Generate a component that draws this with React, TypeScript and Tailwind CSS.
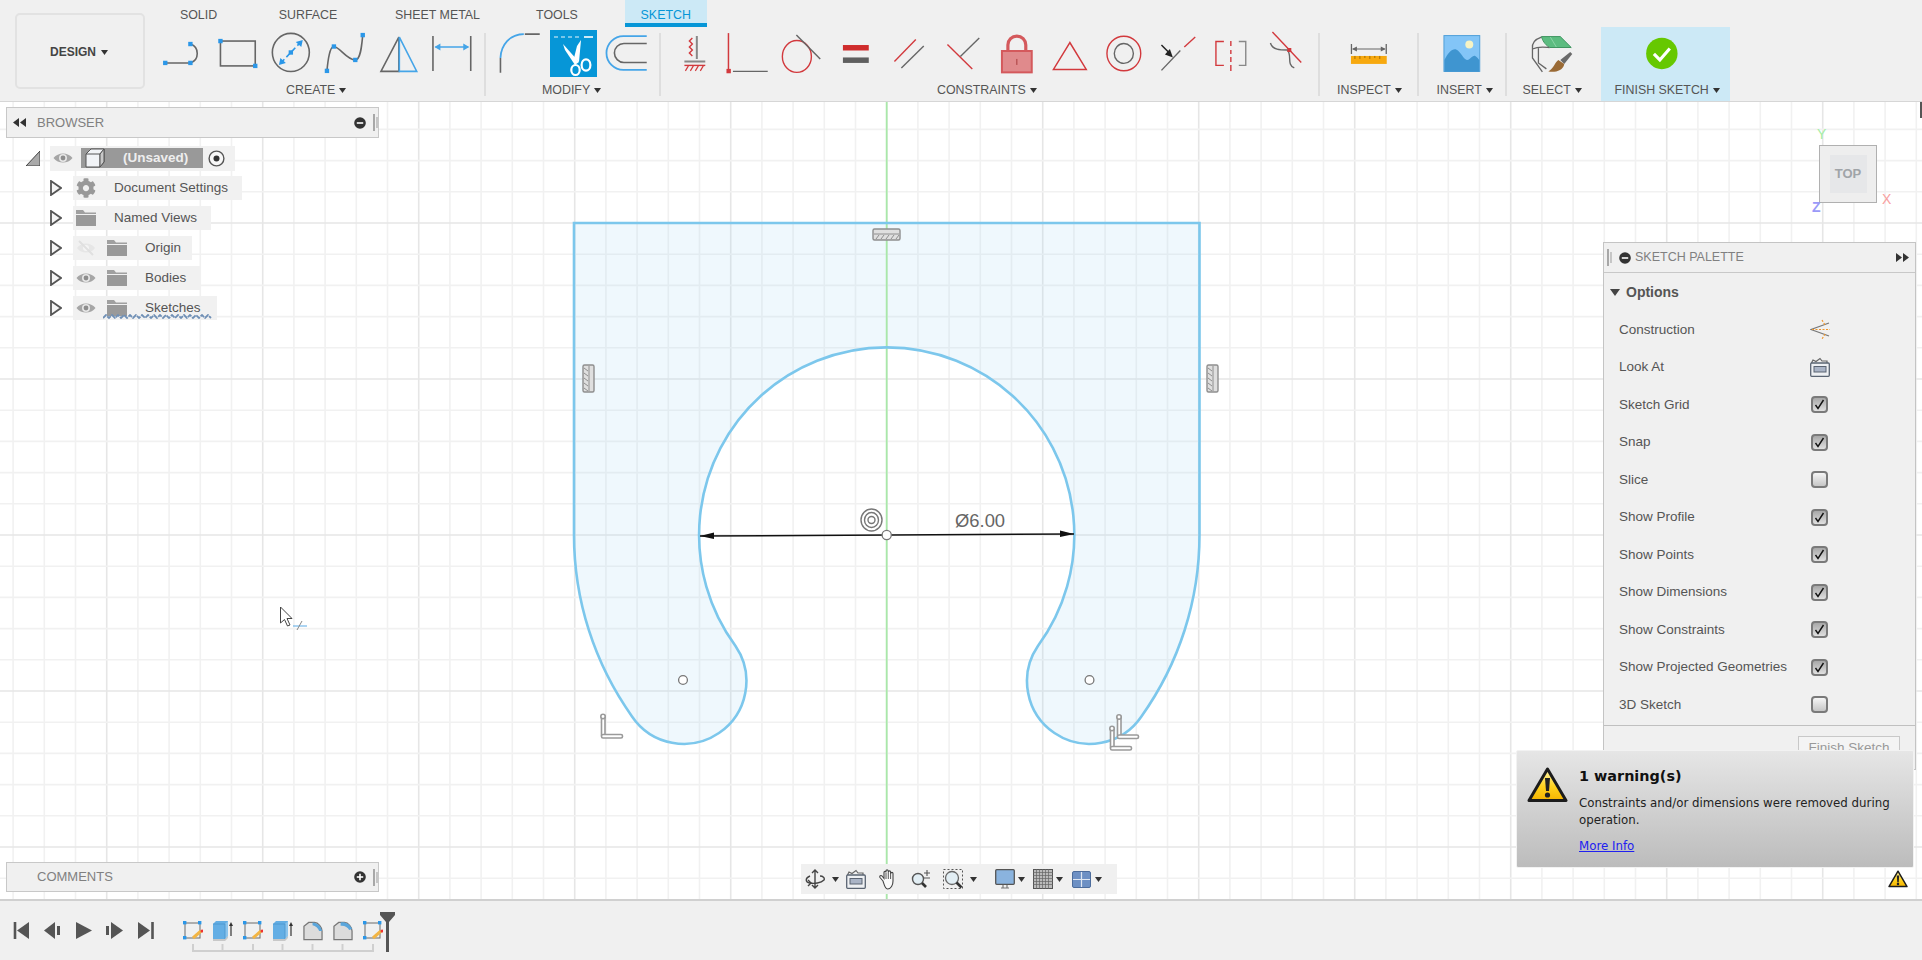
import type { ReactNode } from 'react';
import { FaCog } from 'react-icons/fa';

const GRAY = '#666666';
const BLUE = '#2b97e8';
const RED = '#d2393d';
const OUTLINE =
  'M574 223H1199.5V535A312.7 312.7 0 0 1 1141.4 716.4A62.5 62.5 0 1 1 1037.9 646A187.6 187.6 0 1 0 735.5 646A62.5 62.5 0 1 1 632 716.4A312.7 312.7 0 0 1 574 535Z';

const pts = (list: number[][]) =>
  list.map((p, i) => <rect key={i} x={p[0] - 2.2} y={p[1] - 2.2} width="4.4" height="4.4" fill={BLUE} />);

function Caret() {
  return (
    <svg width="7" height="5" viewBox="0 0 7 5" className="shrink-0">
      <path d="M0 0H7L3.5 5Z" fill="#333" />
    </svg>
  );
}

function Tool({ cx, children }: { cx: number; children: ReactNode }) {
  return (
    <svg viewBox={`${cx - 27} 27 54 46`} fill="none" className="w-[53.7px] h-[46px] shrink-0 overflow-visible">
      {children}
    </svg>
  );
}

function Label({ text, className }: { text: string; className: string }) {
  return (
    <div className={`flex items-center gap-[4px] h-[29px] pt-[6px] text-[12.4px] text-[#555] ${className}`}>
      <span>{text}</span>
      <Caret />
    </div>
  );
}

function Sep() {
  return <div className="w-[2px] h-[63px] mt-[6px] bg-[#dedede] shrink-0" />;
}

function CreateTools() {
  return (
    <>
      <Tool cx={184}>
        <path d="M165 63H190.6A10 10 0 0 0 190.6 44" stroke={GRAY} strokeWidth="1.6" />
        {pts([[165.3, 63], [190.6, 63], [190.6, 44]])}
      </Tool>
      <Tool cx={236.5}>
        <rect x="219" y="41" width="35" height="25" stroke={GRAY} strokeWidth="1.6" />
        {pts([[219, 41], [254, 66]])}
      </Tool>
      <Tool cx={290}>
        <ellipse cx="290" cy="52.5" rx="18.6" ry="19.2" stroke={GRAY} strokeWidth="1.6" />
        <path d="M280 63L300 42" stroke={BLUE} strokeWidth="1.6" strokeDasharray="5 3" />
        <path d="M278 65L279.5 58L285 63ZM302 40L295 42L300.5 47Z" fill={BLUE} />
        {pts([[290, 52.5]])}
      </Tool>
      <Tool cx={345}>
        <path d="M327 71C328 60 330 46 334 46.5C340 47 347 60 355.5 60C361 60 362 45 363 35" stroke={GRAY} strokeWidth="1.6" />
        {pts([[327, 71], [334, 46.5], [355.5, 60], [363, 35]])}
      </Tool>
      <Tool cx={398.5}>
        <path d="M398.5 37L380.5 71.5H398.5Z" stroke={GRAY} strokeWidth="1.6" />
        <path d="M399 37L416.5 71.5H399Z" stroke="#45a5e8" strokeWidth="1.6" />
      </Tool>
      <Tool cx={452.5}>
        <path d="M433.5 36V71M471.5 36V71" stroke={GRAY} strokeWidth="1.6" />
        <path d="M436 47H469" stroke="#45a5e8" strokeWidth="1.6" />
        <path d="M435 47L441 43.5V50.5ZM470 47L464 43.5V50.5Z" fill="#45a5e8" />
      </Tool>
    </>
  );
}

function ModifyTools() {
  return (
    <>
      <Tool cx={520}>
        <path d="M500.5 58V73M525 34H540" stroke={GRAY} strokeWidth="1.6" />
        <path d="M500.5 58C501 45 510 34 524 34" stroke="#45a5e8" strokeWidth="1.8" />
      </Tool>
      <div className="w-[53.7px] h-[46px] shrink-0 relative">
        <svg viewBox="550 30 47 47" className="absolute left-[3.5px] top-[3px] w-[47px] h-[47px] bg-[#0696d7]" fill="none">
          <path d="M554 37H580" stroke="#9fd6f0" strokeWidth="1.4" strokeDasharray="4 3" />
          <path d="M584 37H593" stroke="#fff" strokeWidth="1.6" />
          <path d="M563 44L579 62L575 65L565 50Z" fill="#fff" />
          <path d="M581 40L579 62L574 58L577 46Z" fill="#fff" />
          <ellipse cx="575.5" cy="70" rx="4.2" ry="5" stroke="#fff" strokeWidth="2.2" />
          <ellipse cx="586" cy="65" rx="4.4" ry="5.6" stroke="#fff" strokeWidth="2.2" />
        </svg>
      </div>
      <Tool cx={628}>
        <path d="M648 36H624.5A17 17 0 0 0 624.5 70H648" stroke="#45a5e8" strokeWidth="1.8" />
        <path d="M648 43.5H625A9.5 9.5 0 0 0 625 62.5H648" stroke={GRAY} strokeWidth="1.6" />
      </Tool>
    </>
  );
}

function ConstraintTools() {
  return (
    <>
      <Tool cx={694.5}>
        <path d="M696.5 36V59M684 61.5H705" stroke="#888" strokeWidth="2" />
        <path d="M692 38L689 41L692 44L689 47L692 50L689 53L692 56" stroke={RED} strokeWidth="1.4" />
        <path d="M684 65.5H705" stroke={RED} strokeWidth="1.4" />
        <path d="M688 66L685 71M693 66L690 71M698 66L695 71M703 66L700 71" stroke={RED} strokeWidth="1.2" />
      </Tool>
      <Tool cx={749}>
        <path d="M729.5 33V70" stroke={RED} strokeWidth="1.5" />
        <rect x="727.5" y="69" width="4.4" height="4.4" fill={RED} />
        <path d="M734 71.5H769" stroke={GRAY} strokeWidth="1.5" />
      </Tool>
      <Tool cx={802.5}>
        <ellipse cx="797.5" cy="56.5" rx="14.6" ry="16" stroke={RED} strokeWidth="1.4" />
        <path d="M797 35L821 59" stroke={GRAY} strokeWidth="1.5" />
      </Tool>
      <Tool cx={856}>
        <rect x="843" y="45" width="26" height="5.5" fill="#cf2c2c" />
        <rect x="843" y="57.5" width="26" height="5.5" fill="#5f5f5f" />
      </Tool>
      <Tool cx={910}>
        <path d="M895.5 61.5L917 39.5" stroke={RED} strokeWidth="1.4" />
        <path d="M902.5 68L925 46" stroke={GRAY} strokeWidth="1.4" />
      </Tool>
      <Tool cx={963.5}>
        <path d="M948 44.5L973 69" stroke={RED} strokeWidth="1.4" />
        <path d="M961 56.5L980 38" stroke={GRAY} strokeWidth="1.4" />
      </Tool>
      <Tool cx={1017}>
        <path d="M1008 51V45A9 9 0 0 1 1026 45V51" stroke="#d4595c" strokeWidth="3.2" />
        <rect x="1002" y="51" width="30" height="21.5" fill="#e08a8c" stroke="#d4595c" strokeWidth="2" />
        <path d="M1017 59V65" stroke="#a83a3c" strokeWidth="1" />
      </Tool>
      <Tool cx={1071}>
        <path d="M1071 42.5L1054.5 69.5H1087.5Z" stroke={RED} strokeWidth="1.5" />
      </Tool>
      <Tool cx={1125}>
        <ellipse cx="1125" cy="53.5" rx="17" ry="17.3" stroke={RED} strokeWidth="1.4" />
        <ellipse cx="1125" cy="53.5" rx="9.6" ry="10" stroke={GRAY} strokeWidth="1.4" />
      </Tool>
      <Tool cx={1177.5}>
        <path d="M1161 70.5L1180 50.5" stroke={GRAY} strokeWidth="1.4" />
        <path d="M1184 47L1195 37" stroke={RED} strokeWidth="1.4" />
        <path d="M1161 45L1169 53" stroke="#222" strokeWidth="1.5" />
        <path d="M1172.5 57.5L1164.5 54.5L1169.5 49Z" fill="#222" />
      </Tool>
      <Tool cx={1232}>
        <path d="M1225 41.5H1217V65.5H1225" stroke={RED} strokeWidth="1.4" />
        <path d="M1232 41V46M1232 50V54M1232 57V62M1232 65V71" stroke={RED} strokeWidth="1.4" />
        <path d="M1240 41.5H1247V65.5H1240" stroke="#888" strokeWidth="1.4" />
      </Tool>
      <Tool cx={1284.5}>
        <path d="M1272 32L1301 62.5" stroke={RED} strokeWidth="1.4" />
        <path d="M1270 43C1272 50 1280 50 1287 50C1292 55 1286 65 1294 68" stroke={GRAY} strokeWidth="1.4" />
        <rect x="1287" y="48" width="4" height="4" fill={RED} />
      </Tool>
    </>
  );
}

function Ribbon() {
  return (
    <div className="flex h-[102px] bg-[#f0f0f0] border-b border-[#d6d6d6] shrink-0">
      <div className="w-[157px] pl-[15px] pt-[13px] shrink-0">
        <div className="w-[130px] h-[76px] pt-[2px] pr-[2px] border-2 border-[#e2e2e2] rounded-[5px] flex items-center justify-center gap-[5px]">
          <span className="text-[12px] font-bold text-[#444]">DESIGN</span>
          <Caret />
        </div>
      </div>
      <div className="flex flex-col">
        <div className="flex h-[27px] text-[12.4px] text-[#555]">
          <div className="w-[83px] pt-[3px] flex items-center justify-center">SOLID</div>
          <div className="w-[136px] pt-[3px] flex items-center justify-center">SURFACE</div>
          <div className="w-[123px] pt-[3px] flex items-center justify-center">SHEET METAL</div>
          <div className="w-[116px] pt-[3px] flex items-center justify-center">TOOLS</div>
          <div className="ml-[9.5px] w-[82.5px] pt-[3px] flex items-center justify-center bg-[#cce9f6] text-[#0696d7] shadow-[inset_0_-4px_0_#0696d7]">
            SKETCH
          </div>
        </div>
        <div className="flex h-[74px]">
          <div className="w-[327px]">
            <div className="flex h-[46px]">
              <CreateTools />
            </div>
            <Label text="CREATE" className="ml-[129px]" />
          </div>
          <Sep />
          <div className="w-[173px]">
            <div className="flex h-[46px] pl-[7px]">
              <ModifyTools />
            </div>
            <Label text="MODIFY" className="ml-[56px]" />
          </div>
          <Sep />
          <div className="w-[657px]">
            <div className="flex h-[46px] pl-[6.6px]">
              <ConstraintTools />
            </div>
            <Label text="CONSTRAINTS" className="ml-[276px]" />
          </div>
          <Sep />
          <div className="w-[97px]">
            <div className="flex h-[46px] pl-[22px]">
              <Tool cx={1369}>
                <path d="M1351.5 44V54M1386.5 44V54" stroke={GRAY} strokeWidth="1.3" />
                <path d="M1353 49H1385" stroke={GRAY} strokeWidth="1.2" />
                <path d="M1352 49L1357 46.5V51.5ZM1386 49L1381 46.5V51.5Z" fill={GRAY} />
                <rect x="1351" y="56" width="36" height="8" fill="#f7a90f" />
                <path d="M1355 56V59M1360 56V59M1365 56V58M1370 56V59M1375 56V58M1380 56V59" stroke="#8a5d00" strokeWidth="0.8" />
              </Tool>
            </div>
            <Label text="INSPECT" className="ml-[17px]" />
          </div>
          <Sep />
          <div className="w-[85.5px]">
            <div className="flex h-[46px] pl-[16px]">
              <Tool cx={1461.5}>
                <rect x="1443.5" y="35.5" width="36" height="36" fill="#83c5f7" stroke="#4f9fd9" />
                <path d="M1444 72V60C1449 50 1454 47 1458 51C1462 55 1464 60 1467 60C1470 60 1472 55 1475 56C1477 57 1478 59 1479 60V72Z" fill="#3f95d0" />
                <circle cx="1469" cy="44.5" r="4" fill="#f6f3c4" />
              </Tool>
            </div>
            <Label text="INSERT" className="ml-[17.5px]" />
          </div>
          <Sep />
          <div className="w-[94px]">
            <div className="flex h-[46px] pl-[18.5px]">
              <Tool cx={1551.5}>
                <path d="M1541 36.5H1560L1571 47.5H1549C1544 44 1542 40 1541 36.5Z" fill="#5cbc80" stroke="#3e9460" />
                <path d="M1550 37L1556 47" stroke="#8ad4a6" strokeWidth="1" />
                <path d="M1541 37C1535 39 1531 43 1532 49L1532 58L1542 72M1532 49C1538 46 1544 47 1549 47.5M1538 48V63L1546 69" stroke={GRAY} strokeWidth="1.3" />
                <path d="M1560 60L1570 52L1572 54L1564 64Z" fill="#6a6a6a" />
                <path d="M1558 60C1554 63 1554 68 1548 71.5C1554 73 1563 71 1564 64Z" fill="#9a6a35" />
              </Tool>
            </div>
            <Label text="SELECT" className="ml-[16px]" />
          </div>
          <div className="w-[129px] bg-[#cce9f6]">
            <div className="flex h-[46px] pl-[34px]">
              <Tool cx={1662}>
                <ellipse cx="1662" cy="53.5" rx="15.8" ry="15.8" fill="#66c800" />
                <path d="M1654 54L1660 60L1670 48.5" stroke="#fff" strokeWidth="3.2" />
              </Tool>
            </div>
            <Label text="FINISH SKETCH" className="ml-[14px]" />
          </div>
        </div>
      </div>
    </div>
  );
}

function LGlyph({ x, y }: { x: number; y: number }) {
  return (
    <g fill="#fff" stroke="#9a9a9a" strokeWidth="1.6">
      <rect x={x - 1.5} y={y} width="3.5" height="22" rx="1.5" />
      <rect x={x - 1.5} y={y + 19.5} width="21" height="3.5" rx="1.5" />
      <circle cx={x} cy={y + 1.5} r="2.2" />
    </g>
  );
}

function HatchH({ x, y }: { x: number; y: number }) {
  const ticks = [3, 8, 13, 18, 23];
  return (
    <g fill="none" stroke="#8e8e8e">
      <rect x={x} y={y} width="27" height="11" rx="1.5" strokeWidth="1.4" fill="#dfdfdf" />
      <path d={`M${x + 1} ${y + 5}H${x + 26}`} strokeWidth="1" />
      {ticks.map((t) => (
        <path key={t} d={`M${x + t} ${y + 10}L${x + t + 3} ${y + 6}`} strokeWidth="1" />
      ))}
    </g>
  );
}

function HatchV({ x, y }: { x: number; y: number }) {
  const ticks = [3, 8, 13, 18, 23];
  return (
    <g fill="none" stroke="#8e8e8e">
      <rect x={x} y={y} width="11" height="27" rx="1.5" strokeWidth="1.4" fill="#dfdfdf" />
      <path d={`M${x + 6} ${y + 1}V${y + 26}`} strokeWidth="1" />
      {ticks.map((t) => (
        <path key={t} d={`M${x + 1} ${y + t}L${x + 5} ${y + t + 3}`} strokeWidth="1" />
      ))}
    </g>
  );
}

function SketchCanvas() {
  const vx: number[] = [];
  const hy: number[] = [];
  for (let k = -29; k <= 33; k++) vx.push(k);
  for (let k = -14; k <= 12; k++) hy.push(k);

  return (
    <svg viewBox="0 102 1922 797" className="absolute left-0 top-0 w-[1922px] h-[797px]" fill="none">
      {vx.map((k) => (
        <path key={k} d={`M${886.7 + k * 31.2} 102V899`} stroke={k % 5 === 0 ? '#e6e6e6' : '#f1f1f1'} strokeWidth="1.6" />
      ))}
      {hy.map((k) => (
        <path key={k} d={`M0 ${535 + k * 31.2}H1922`} stroke={k % 5 === 0 ? '#e6e6e6' : '#f1f1f1'} strokeWidth="1.6" />
      ))}
      <path d={OUTLINE} fill="#a6d8f5" fillOpacity="0.18" />
      <path d="M886.7 102V899" stroke="#a9e8a9" strokeWidth="1.8" />
      <path d={OUTLINE} stroke="#7cc7ec" strokeWidth="2.6" />
      <HatchH x={873} y={229} />
      <HatchV x={583} y={365} />
      <HatchV x={1207} y={365} />
      <path d="M700 536L1074 534" stroke="#111" strokeWidth="1.5" />
      <path d="M700 536L714 532.5V539ZM1074 534L1060 530.5V537Z" fill="#111" />
      <g stroke="#777">
        <ellipse cx="871.5" cy="520" rx="10.5" ry="11" strokeWidth="1.4" />
        <ellipse cx="871.5" cy="520" rx="7" ry="7.5" strokeWidth="1.4" />
        <circle cx="871.5" cy="520" r="3.5" strokeWidth="1.4" />
      </g>
      <circle cx="886.7" cy="535" r="4.6" fill="#fff" stroke="#777" strokeWidth="1.3" />
      <circle cx="683" cy="680" r="4.4" fill="#fff" stroke="#777" strokeWidth="1.3" />
      <circle cx="1089.5" cy="680" r="4.4" fill="#fff" stroke="#777" strokeWidth="1.3" />
      <LGlyph x={603} y={715} />
      <LGlyph x={1119} y={715.5} />
      <LGlyph x={1112} y={727} />
      <text x="955" y="526.5" fontSize="18.4" fill="#666">Ø6.00</text>
      <path d="M280.5 607V623L284.5 619.5L287.5 626L290 625L287 618.5H292Z" fill="#fff" stroke="#444" strokeWidth="1" />
      <path d="M293 626H307" stroke="#59a9e5" strokeWidth="1" />
      <path d="M297 630L302 621" stroke="#888" strokeWidth="1" />
    </svg>
  );
}

function Eye({ off }: { off?: boolean }) {
  if (off) {
    return (
      <svg width="20" height="16" viewBox="0 0 20 16" fill="none" className="shrink-0">
        <path d="M1 8C5 2 15 2 19 8C15 14 5 14 1 8Z" fill="#e6e6e6" />
        <circle cx="10" cy="8" r="3" fill="#f4f4f4" />
        <path d="M3 1L17 15" stroke="#e0e0e0" strokeWidth="2" />
      </svg>
    );
  }
  return (
    <svg width="20" height="16" viewBox="0 0 20 16" fill="none" className="shrink-0">
      <path d="M0.5 8C5 2 15 2 19.5 8C15 14 5 14 0.5 8Z" fill="#a6a6a6" />
      <circle cx="10" cy="8" r="4" fill="#e6e6e6" />
      <circle cx="10" cy="8" r="2.4" fill="#8d8d8d" />
    </svg>
  );
}

function Folder() {
  return (
    <svg width="20" height="16" viewBox="0 0 20 16" className="shrink-0">
      <path d="M0 0H7L9 2.5H20V4H0Z" fill="#a0a0a0" />
      <rect x="0" y="5" width="20" height="11" fill="#999" />
    </svg>
  );
}

function Chevron() {
  return (
    <svg width="12" height="16" viewBox="0 0 12 16" fill="none" className="shrink-0">
      <path d="M1 1L11 8L1 15Z" stroke="#555" strokeWidth="1.8" fill="#f4f4f4" />
    </svg>
  );
}

function TreeRow({ icons, text, pill, wavy }: { icons: ReactNode; text: string; pill: string; wavy?: boolean }) {
  return (
    <div className="flex items-center h-[30px] pl-[44px] gap-[11px]">
      <Chevron />
      <div className={`relative flex items-center h-[24px] bg-[#f1f1f1] pl-[3px] ${pill}`}>
        {icons}
        <span className="text-[13.5px] text-[#555] whitespace-nowrap">{text}</span>
        {wavy && (
          <svg width="110" height="5" viewBox="0 0 110 5" fill="none" className="absolute left-[30px] top-[18px]">
            <path d="M0 4L3 1L6 4L9 1L12 4L15 1L18 4L21 1L24 4L27 1L30 4L33 1L36 4L39 1L42 4L45 1L48 4L51 1L54 4L57 1L60 4L63 1L66 4L69 1L72 4L75 1L78 4L81 1L84 4L87 1L90 4L93 1L96 4L99 1L102 4L105 1L108 4" stroke="#6f8fb5" strokeWidth="1.8" strokeDasharray="5 1" />
          </svg>
        )}
      </div>
    </div>
  );
}

function Grip() {
  return (
    <svg width="5" height="17" viewBox="0 0 5 17" className="shrink-0">
      <path d="M1 0V17" stroke="#777" strokeWidth="1.2" />
      <path d="M4 3V14" stroke="#bbb" strokeWidth="1.6" />
    </svg>
  );
}

function RoundSign({ plus }: { plus?: boolean }) {
  return (
    <svg width="12" height="12" viewBox="0 0 12 12" className="shrink-0">
      <circle cx="6" cy="6" r="5.8" fill="#333" />
      <path d="M2.8 6H9.2" stroke="#fff" strokeWidth="1.6" />
      {plus && <path d="M6 2.8V9.2" stroke="#fff" strokeWidth="1.6" />}
    </svg>
  );
}

function BrowserPanel() {
  return (
    <div className="absolute left-[6px] top-[5px] w-[373px]">
      <div className="flex items-center h-[31px] bg-[#f0f0f0] border border-[#c8c8c8]">
        <svg width="13" height="9" viewBox="0 0 13 9" className="ml-[6px] shrink-0">
          <path d="M6 0V9L0 4.5ZM13 0V9L7 4.5Z" fill="#333" />
        </svg>
        <span className="ml-[11px] text-[13px] text-[#808080]">BROWSER</span>
        <div className="ml-auto flex items-center gap-[7px]">
          <RoundSign />
          <Grip />
        </div>
      </div>
      <div className="mt-[5px]">
        <div className="flex items-center h-[30px] pl-[20px] gap-[10px]">
          <svg width="14" height="15" viewBox="0 0 14 15" className="shrink-0">
            <path d="M14 0V15H0Z" fill="#aaa" stroke="#444" strokeWidth="1" />
          </svg>
          <div className="flex items-center h-[25px] w-[185px] bg-[#f1f1f1] pl-[3px]">
            <Eye />
            <div className="ml-[8px] flex items-center h-[20px] w-[122px] bg-[#999] pl-[4px]">
              <svg width="20" height="20" viewBox="0 0 20 20" fill="none" className="shrink-0">
                <path d="M1 6L6 1H19V14L15 19H1Z" fill="#f1f3f6" stroke="#555" />
                <path d="M1 6H15V19M15 6L19 1" stroke="#555" />
                <path d="M15 6L19 1V14L15 19Z" fill="#c8c8c8" stroke="#555" />
              </svg>
              <span className="ml-[18px] text-[13.5px] font-bold text-[#eeeeee] whitespace-nowrap">(Unsaved)</span>
            </div>
            <svg width="17" height="17" viewBox="0 0 17 17" fill="none" className="ml-[5px] shrink-0">
              <circle cx="8.5" cy="8.5" r="7.4" stroke="#555" strokeWidth="1.4" fill="#f7f7f7" />
              <circle cx="8.5" cy="8.5" r="3" fill="#333" />
            </svg>
          </div>
        </div>
        <TreeRow
          pill="pr-[14px]"
          text="Document Settings"
          icons={<FaCog className="w-[20px] h-[20px] mr-[18px] text-[#999] shrink-0" />}
        />
        <TreeRow pill="pr-[14px]" text="Named Views" icons={<div className="mr-[18px] flex"><Folder /></div>} />
        <TreeRow
          pill="pr-[11px]"
          text="Origin"
          icons={
            <div className="flex items-center gap-[11px] mr-[18px]">
              <Eye off />
              <Folder />
            </div>
          }
        />
        <TreeRow
          pill="pr-[15px]"
          text="Bodies"
          icons={
            <div className="flex items-center gap-[11px] mr-[18px]">
              <Eye />
              <Folder />
            </div>
          }
        />
        <TreeRow
          pill="pr-[16px]"
          text="Sketches"
          wavy
          icons={
            <div className="flex items-center gap-[11px] mr-[18px]">
              <Eye />
              <Folder />
            </div>
          }
        />
      </div>
    </div>
  );
}

function CommentsPanel() {
  return (
    <div className="absolute left-[6px] bottom-[7px] w-[373px] h-[30px] flex items-center bg-[#f0f0f0] border border-[#c8c8c8]">
      <span className="ml-[30px] text-[13px] text-[#808080]">COMMENTS</span>
      <div className="ml-auto flex items-center gap-[7px]">
        <RoundSign plus />
        <Grip />
      </div>
    </div>
  );
}

function Check({ on }: { on: boolean }) {
  return (
    <div
      className={`w-[17px] h-[17px] rounded-[4px] border-2 border-[#7a7a7a] flex items-center justify-center ${
        on ? 'bg-linear-to-b from-[#a8a8a8] to-[#e0e0e0]' : 'bg-linear-to-b from-[#f6f6f6] to-[#c6c6c6]'
      }`}
    >
      {on && (
        <svg width="11" height="11" viewBox="0 0 11 11" fill="none">
          <path d="M1.5 6L4 9.5L9.5 1" stroke="#111" strokeWidth="1.4" />
        </svg>
      )}
    </div>
  );
}

function LookAt() {
  return (
    <svg width="20" height="20" viewBox="0 0 20 20" fill="none" className="shrink-0">
      <path d="M1.5 6L3 3L6 4.5L10 1.5L12 4L17 4V6" stroke="#666" strokeWidth="1.2" />
      <rect x="0.7" y="6" width="18.6" height="13.3" rx="1" stroke="#5a6472" strokeWidth="1.3" fill="#eef0f3" />
      <rect x="4" y="9.5" width="12" height="5.5" fill="#aab4c6" stroke="#5a6472" />
    </svg>
  );
}

const OPTIONS: { label: string; on?: boolean }[] = [
  { label: 'Sketch Grid', on: true },
  { label: 'Snap', on: true },
  { label: 'Slice', on: false },
  { label: 'Show Profile', on: true },
  { label: 'Show Points', on: true },
  { label: 'Show Dimensions', on: true },
  { label: 'Show Constraints', on: true },
  { label: 'Show Projected Geometries', on: true },
  { label: '3D Sketch', on: false },
];

function PaletteRow({ label, children }: { label: string; children: ReactNode }) {
  return (
    <div className="flex items-center justify-between h-[37.5px] pl-[15px] pr-[85.5px]">
      <span className="text-[13.5px] text-[#555] whitespace-nowrap">{label}</span>
      <div className="w-[20px] flex justify-center">{children}</div>
    </div>
  );
}

function SketchPalette() {
  return (
    <div className="absolute right-[6px] top-[140px] w-[313px] h-[528px] bg-[#f0f0f0] border border-[#c4c4c4] overflow-hidden">
      <div className="flex items-center h-[30px] border-b border-[#c8c8c8]">
        <div className="ml-[3px]">
          <Grip />
        </div>
        <div className="ml-[7px]">
          <RoundSign />
        </div>
        <span className="ml-[4px] text-[12.5px] text-[#808080]">SKETCH PALETTE</span>
        <svg width="13" height="9" viewBox="0 0 13 9" className="ml-auto mr-[6px] shrink-0">
          <path d="M0 0V9L6 4.5ZM7 0V9L13 4.5Z" fill="#333" />
        </svg>
      </div>
      <div className="flex items-center h-[38px] pl-[6px]">
        <svg width="10" height="7" viewBox="0 0 10 7" className="shrink-0">
          <path d="M0 0H10L5 7Z" fill="#444" />
        </svg>
        <span className="ml-[6px] text-[14px] font-bold text-[#555]">Options</span>
      </div>
      <PaletteRow label="Construction">
        <svg width="20" height="21" viewBox="0 0 20 21" fill="none">
          <path d="M19 4L1 10.5L19 17" stroke="#777" strokeWidth="1.3" />
          <path d="M2 10.5H20M12 1L15 6M15 15L12 20" stroke="#f0962a" strokeWidth="1.2" strokeDasharray="2 1.5" />
        </svg>
      </PaletteRow>
      <PaletteRow label="Look At">
        <LookAt />
      </PaletteRow>
      {OPTIONS.map((o) => (
        <PaletteRow key={o.label} label={o.label}>
          <Check on={!!o.on} />
        </PaletteRow>
      ))}
      <div className="mt-[1px] border-t border-[#c0c0c0] flex justify-end pr-[15px] pt-[10px]">
        <button className="w-[102px] h-[26px] border border-[#c8c8c8] bg-[#f4f4f4] text-[13.5px] text-[#999]">Finish Sketch</button>
      </div>
    </div>
  );
}

function WarnIcon({ size, id }: { size: string; id: string }) {
  return (
    <svg viewBox="0 0 41 36" className={`shrink-0 ${size}`}>
      <defs>
        <linearGradient id={id} x1="0" y1="0" x2="0" y2="1">
          <stop offset="0" stopColor="#fff6b0" />
          <stop offset="0.55" stopColor="#ffd21f" />
          <stop offset="1" stopColor="#f5b400" />
        </linearGradient>
      </defs>
      <path d="M20.5 2L39 33.5H2Z" fill={`url(#${id})`} stroke="#1c1c1c" strokeWidth="3" strokeLinejoin="round" />
      <path d="M18 11H23L22 24H19Z" fill="#222" />
      <circle cx="20.5" cy="28" r="2.6" fill="#222" />
    </svg>
  );
}

function WarningToast() {
  return (
    <div className="absolute right-[8px] top-[648px] w-[398px] h-[118px] flex rounded-[2px] bg-linear-to-b from-[#e6e6e6] to-[#bcbcbc] border border-[#f2f2f2] pl-[10px]">
      <div className="pt-[16px]">
        <WarnIcon size="w-[41px] h-[36px]" id="warnBig" />
      </div>
      <div className="ml-[11px] w-[325px] pt-[15px] font-['DejaVu_Sans',sans-serif]">
        <div className="text-[14.4px] leading-[20px] font-bold text-[#111]">1 warning(s)</div>
        <div className="mt-[9px] text-[11.8px] leading-[17px] text-[#222]">Constraints and/or dimensions were removed during operation.</div>
        <div className="mt-[9px] text-[11.8px] leading-[17px] text-[#2020f0] underline">More Info</div>
      </div>
    </div>
  );
}

function NavBar() {
  return (
    <div className="absolute left-[801px] top-[762px] w-[316px] h-[30px] bg-[#f0f0f0] flex items-center pl-[4px]">
      <svg width="20" height="20" viewBox="0 0 20 20" fill="none" className="shrink-0">
        <path d="M10 1V19M7 4L10 1L13 4M7 16L10 19L13 16" stroke="#444" strokeWidth="1.4" />
        <path d="M5 7C0 9 0 13 5 14C9 15 16 14 19 11C20 9 18 7 15 7" stroke="#444" strokeWidth="1.4" />
        <path d="M3 11L6 14L3 17" stroke="#444" strokeWidth="1.4" />
      </svg>
      <div className="ml-[6.5px]"><Caret /></div>
      <div className="ml-[7.5px]"><LookAt /></div>
      <svg width="21" height="21" viewBox="0 0 21 21" fill="none" className="ml-[12px] shrink-0">
        <path d="M5 12L2 8.5C1 7 3 6 4 7L6 9.5V3.5C6 2 8 2 8 3.5V2C8 0.5 10 0.5 10.3 2V3C10.5 1.5 12.5 1.5 12.6 3V4.5C13 3 15 3 15 4.5V12C15 16 13 20 9.5 20C7 20 6 15 5 12Z" fill="#fafafa" stroke="#444" strokeWidth="1.1" />
        <path d="M8 4V10M10.3 3V10M12.6 4V10" stroke="#444" strokeWidth="0.9" />
      </svg>
      <svg width="20" height="20" viewBox="0 0 20 20" fill="none" className="ml-[12px] shrink-0">
        <circle cx="7" cy="10" r="5.5" fill="#e2eef4" stroke="#555" strokeWidth="1.4" />
        <path d="M11 14L15 18" stroke="#333" strokeWidth="2.6" />
        <path d="M13 4H19M16 1V7M13 9H19" stroke="#555" strokeWidth="1.1" />
      </svg>
      <svg width="20" height="20" viewBox="0 0 20 20" fill="none" className="ml-[12px] shrink-0">
        <rect x="0.5" y="0.5" width="19" height="19" stroke="#555" strokeDasharray="2 2" />
        <circle cx="9" cy="9" r="6.5" fill="#e2eef4" stroke="#666" strokeWidth="1.3" />
        <path d="M13.5 13.5L18.5 18.5" stroke="#333" strokeWidth="2.6" />
      </svg>
      <div className="ml-[6.5px]"><Caret /></div>
      <svg width="20" height="20" viewBox="0 0 20 20" fill="none" className="ml-[18.5px] shrink-0">
        <rect x="0.7" y="0.7" width="18.6" height="14.6" rx="1" fill="#8ab3de" stroke="#555" strokeWidth="1.3" />
        <path d="M6 19H14M8 16V19M12 16V19" stroke="#777" strokeWidth="1.2" />
      </svg>
      <div className="ml-[2.5px]"><Caret /></div>
      <svg width="20" height="20" viewBox="0 0 20 20" fill="none" className="ml-[8.5px] shrink-0">
        <rect x="0.5" y="0.5" width="19" height="19" fill="#bbb" stroke="#555" />
        <path d="M3.5 0V20M6.5 0V20M9.5 0V20M12.5 0V20M15.5 0V20M0 3.5H20M0 6.5H20M0 9.5H20M0 12.5H20M0 15.5H20" stroke="#666" strokeWidth="0.7" />
      </svg>
      <div className="ml-[2.5px]"><Caret /></div>
      <svg width="19" height="17" viewBox="0 0 19 17" className="ml-[9.5px] shrink-0">
        <rect x="0.5" y="0.5" width="18" height="16" rx="1.5" fill="#6d90c4" stroke="#4c6c9c" />
        <path d="M9.5 1V16M1 8.5H18" stroke="#dfe7f2" strokeWidth="1.2" />
      </svg>
      <div className="ml-[3.5px]"><Caret /></div>
    </div>
  );
}

function SketchStep() {
  return (
    <svg width="20" height="19" viewBox="0 0 20 19" fill="none" className="shrink-0">
      <rect x="2" y="2" width="15" height="15" stroke="#777" strokeWidth="1.1" />
      <rect x="0" y="0" width="3.4" height="3.4" fill={BLUE} />
      <rect x="15" y="0" width="3.4" height="3.4" fill={BLUE} />
      <rect x="0" y="15" width="3.4" height="3.4" fill={BLUE} />
      <path d="M10 17L18 10" stroke="#f2b544" strokeWidth="3" />
      <circle cx="19" cy="10" r="1.5" fill="#e33" />
    </svg>
  );
}

function ExtrudeStep() {
  return (
    <svg width="20" height="20" viewBox="0 0 20 20" fill="none" className="shrink-0">
      <path d="M0 3L3 0H15V15L12 18H0Z" fill="#64aee4" />
      <path d="M12 3L15 0V15L12 18Z" fill="#8cc4ec" />
      <path d="M0 3H12V18" stroke="#4a94cc" strokeWidth="0.8" />
      <path d="M0 18H12L15 15V17L12 20H0Z" fill="#c8c8c8" />
      <path d="M18 3V15" stroke="#333" strokeWidth="1.2" />
      <path d="M16 5L18 1L20 5Z" fill="#333" />
    </svg>
  );
}

function FilletStep({ flip }: { flip?: boolean }) {
  return (
    <svg width="20" height="20" viewBox="0 0 21 20" fill="none" className="shrink-0">
      <path d="M1 5L6 1H12C16 1 20 6 20 10V19H1Z" fill="#dcdcdc" stroke="#777" strokeWidth="1.3" />
      {flip ? (
        <path d="M8 1C13 0 18 3 20 8L17 9C15.5 6 12 4 8 4.5Z" fill="#5aa6dc" />
      ) : (
        <path d="M10 1C15 1 19 5 20 10L17 10C16 7 13 4.5 10 4Z" fill="#5aa6dc" />
      )}
    </svg>
  );
}

function Timeline() {
  return (
    <div className="relative flex items-center h-[61px] bg-[#f0f0f0] border-t-2 border-[#d0d0d0] pl-[13px] shrink-0">
      <svg width="16" height="17" viewBox="0 0 16 17" className="shrink-0">
        <path d="M2 0V17" stroke="#555" strokeWidth="2.6" />
        <path d="M16 0V17L4 8.5Z" fill="#555" />
      </svg>
      <svg width="16" height="17" viewBox="0 0 16 17" className="ml-[15px] shrink-0">
        <path d="M11 0V17L0 8.5Z" fill="#555" />
        <rect x="13" y="4" width="3" height="9" fill="#555" />
      </svg>
      <svg width="16" height="17" viewBox="0 0 16 17" className="ml-[16px] shrink-0">
        <path d="M0 0V17L16 8.5Z" fill="#555" />
      </svg>
      <svg width="17" height="17" viewBox="0 0 17 17" className="ml-[14px] shrink-0">
        <rect x="0" y="4" width="3" height="9" fill="#555" />
        <path d="M5 0V17L17 8.5Z" fill="#555" />
      </svg>
      <svg width="16" height="17" viewBox="0 0 16 17" className="ml-[15px] shrink-0">
        <path d="M0 0V17L12 8.5Z" fill="#555" />
        <path d="M14.5 0V17" stroke="#555" strokeWidth="2.6" />
      </svg>
      <div className="ml-[29px] flex items-center gap-[10px]">
        <SketchStep />
        <ExtrudeStep />
        <SketchStep />
        <ExtrudeStep />
        <FilletStep />
        <FilletStep flip />
        <SketchStep />
      </div>
      <svg viewBox="190 899 210 61" className="absolute left-[190px] top-[-2px] w-[210px] h-[61px]" fill="none">
        <path d="M193 944V951H373V944M222.5 944V951M253 944V951M282.5 944V951M312.5 944V951M342.5 944V951" stroke="#cfcfcf" strokeWidth="2" />
        <path d="M380 912H395V915L389 922V952H386V922L380 915Z" fill="#555" />
      </svg>
    </div>
  );
}

function NavCube() {
  return (
    <div className="absolute left-[1819px] top-[43px] w-[58px] h-[58px] bg-[#eeeeee] border border-[#b0b0b0] flex items-center justify-center">
      <div className="w-[37px] h-[38px] bg-[#e6e7e9] flex items-center justify-center text-[13px] font-bold text-[#a0a4a8]">TOP</div>
      <span className="absolute left-[-3px] top-[-22px] text-[14px] text-[#a4eea4]">Y</span>
      <span className="absolute left-[-8px] top-[51px] text-[14px] font-bold text-[#9a9af8]">Z</span>
      <span className="absolute left-[62px] top-[43px] text-[14px] text-[#f8a0a0]">X</span>
    </div>
  );
}

export default function App() {
  return (
    <div className="w-[1922px] h-[960px] flex flex-col overflow-hidden bg-white font-['Liberation_Sans',sans-serif]">
      <Ribbon />
      <div className="relative flex-1">
        <SketchCanvas />
        <BrowserPanel />
        <CommentsPanel />
        <NavCube />
        <SketchPalette />
        <NavBar />
        <WarningToast />
        <div className="absolute left-[1888px] top-[768px]">
          <WarnIcon size="w-[20px] h-[18px]" id="warnSmall" />
        </div>
        <div className="absolute left-[1920px] top-0 w-[2px] h-[16px] bg-[#555]" />
      </div>
      <Timeline />
    </div>
  );
}
